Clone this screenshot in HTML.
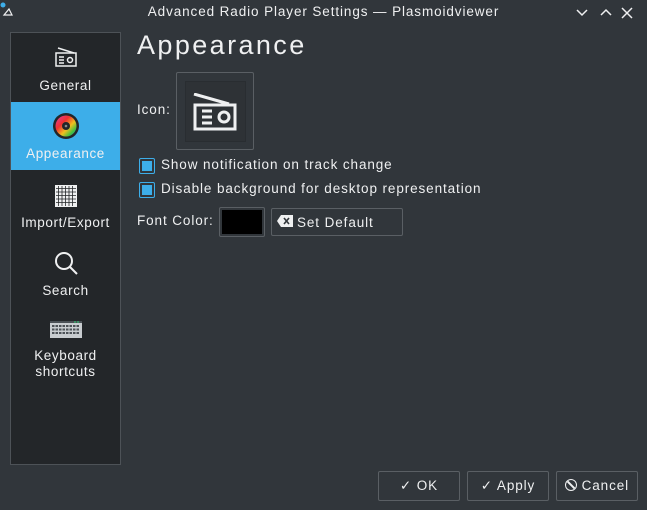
<!DOCTYPE html>
<html><head><meta charset="utf-8"><style>
*{margin:0;padding:0;box-sizing:border-box}
body{width:647px;height:510px;background:#31363b;font-family:"Liberation Sans",sans-serif;color:#eff0f1;position:relative;overflow:hidden;font-size:13.5px;letter-spacing:0.9px}
.abs{position:absolute}
.title{top:4px;left:0;width:647px;text-align:center;font-size:13.5px;color:#eff0f1}
.side{left:10px;top:32px;width:111px;height:433px;background:#232629;border:1px solid #4d5257}
.item{position:absolute;left:0;width:109px;text-align:center;font-size:13.5px;letter-spacing:0.6px}
.sel{background:#3daee9}
.btn{border:1px solid #5a5f64;border-radius:2px;background:#31363b;text-align:center;line-height:28px}
.cb{width:16px;height:16px;border:1px solid #3daee9;border-radius:2px;background:#31363b}
.cb i{position:absolute;left:2px;top:2px;width:10px;height:10px;background:#3daee9}
</style></head><body>
<svg class="abs" style="left:0;top:2px" width="14" height="14"><circle cx="3" cy="3" r="2.5" fill="#3daee9"/><path d="M4 13 L9 7 L12 13 Z" fill="none" stroke="#eff0f1" stroke-width="1.2"/></svg>
<div class="abs title">Advanced Radio Player Settings — Plasmoidviewer</div>
<svg class="abs" style="left:575px;top:7px" width="60" height="12" stroke="#eff0f1" stroke-width="1.5" fill="none"><path d="M2 3 L7 8 L12 3"/><path d="M26 8 L31 3 L36 8"/><path d="M47 1 L57 11 M57 1 L47 11"/></svg>
<div class="abs side">
  <div class="item" style="top:13px">
    <svg width="24" height="22" viewBox="0 0 24 22" fill="none" stroke="#eff0f1" stroke-width="1.5"><path d="M4 2 L20 7"/><rect x="2" y="7" width="20" height="13"/><path d="M5 11h5M5 14h5M5 17h5"/><circle cx="16" cy="14" r="2.5"/></svg>
    <div style="margin-top:7px">General</div></div>
  <div class="item sel" style="top:69px;height:68px;padding-top:10px">
    <svg width="28" height="28" viewBox="0 0 28 28"><defs><linearGradient id="g" x1="0" y1="0" x2="1" y2="1"><stop offset="0" stop-color="#e040a0"/><stop offset=".35" stop-color="#f03030"/><stop offset=".6" stop-color="#f0c020"/><stop offset=".8" stop-color="#40c040"/><stop offset="1" stop-color="#3080f0"/></linearGradient></defs><circle cx="14" cy="14" r="13" fill="#232629"/><circle cx="14" cy="14" r="10.5" fill="url(#g)"/><circle cx="14" cy="14" r="4" fill="#232629"/><circle cx="14" cy="14" r="1.3" fill="#888"/></svg>
    <div style="margin-top:3px">Appearance</div></div>
  <div class="item" style="top:152px">
    <svg width="22" height="22" viewBox="0 0 22 22"><rect x="0" y="0" width="22" height="22" fill="#eff0f1"/><path d="M3.5 1v20M7 1v20M10.5 1v20M14 1v20M17.5 1v20M1 3.5h20M1 7h20M1 10.5h20M1 14h20M1 17.5h20" stroke="#232629" stroke-width="0.8"/></svg>
    <div style="margin-top:5px">Import/Export</div></div>
  <div class="item" style="top:217px">
    <svg width="26" height="26" viewBox="0 0 26 26" fill="none" stroke="#eff0f1" stroke-width="2"><circle cx="11" cy="11" r="8"/><path d="M17 17 L24 24"/></svg>
    <div style="margin-top:4px">Search</div></div>
  <div class="item" style="top:286px">
    <svg width="34" height="20" viewBox="0 0 34 20"><rect x="1" y="2" width="32" height="17" fill="#c8cccf"/><rect x="1" y="2" width="32" height="2" fill="#4a5055"/><path d="M25 3h2M28 3h2" stroke="#2ecc71" stroke-width="1"/><path d="M3 7h28M3 10.5h28M3 14h28" stroke="#4d5257" stroke-width="2" stroke-dasharray="2.5 1"/></svg>
    <div style="margin-top:6px;line-height:16px">Keyboard<br>shortcuts</div></div>
</div>
<div class="abs" style="left:137px;top:30px;font-size:27px;letter-spacing:2.4px">Appearance</div>
<div class="abs" style="left:137px;top:102px">Icon:</div>
<div class="abs" style="left:176px;top:72px;width:78px;height:78px;border:1px solid #5a5f64;border-radius:2px"><div style="position:absolute;left:8px;top:8px;width:61px;height:61px;border:1px solid #292d31;background:#2e3236"></div>
<svg class="abs" style="left:16px;top:20px" width="44" height="38" viewBox="0 0 44 38" fill="none" stroke="#eff0f1" stroke-width="3"><path d="M1 1 L36 11"/><rect x="2" y="12" width="40" height="24"/><path d="M9 18h10M9 24h10M9 30h10"/><circle cx="31" cy="24" r="5"/></svg></div>
<div class="abs cb" style="left:139px;top:158px"><i></i></div>
<div class="abs" style="left:161px;top:157px">Show notification on track change</div>
<div class="abs cb" style="left:139px;top:182px"><i></i></div>
<div class="abs" style="left:161px;top:181px">Disable background for desktop representation</div>
<div class="abs" style="left:137px;top:213px">Font Color:</div>
<div class="abs" style="left:219px;top:207px;width:46px;height:30px;border:1px solid #5a5f64;border-radius:2px;background:#31363b"><div style="position:absolute;left:2px;top:2px;right:2px;bottom:2px;background:#000"></div></div>
<div class="abs btn" style="left:271px;top:208px;width:132px;height:28px;text-align:left;padding-left:25px">Set Default</div>
<svg class="abs" style="left:277px;top:215px" width="16" height="12" viewBox="0 0 16 12"><path d="M4 0h12v12H4L0 6z" fill="#eff0f1"/><path d="M7 3l5 6M12 3l-5 6" stroke="#31363b" stroke-width="1.6"/></svg>
<div class="abs btn" style="left:378px;top:471px;width:82px;height:30px">✓ OK</div>
<div class="abs btn" style="left:467px;top:471px;width:82px;height:30px">✓ Apply</div>
<div class="abs btn" style="left:556px;top:471px;width:82px;height:30px"><span style="display:inline-block;width:12px;height:12px;border:1.5px solid #eff0f1;border-radius:50%;vertical-align:-1px;position:relative;overflow:hidden"><span style="position:absolute;left:4px;top:-2px;width:1.5px;height:14px;background:#eff0f1;transform:rotate(-45deg)"></span></span> Cancel</div>
</body></html>
